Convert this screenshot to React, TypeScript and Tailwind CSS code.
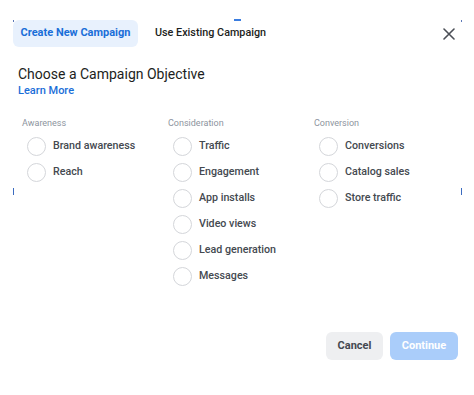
import React from "react";

const columns = [
  { title: "Awareness", items: ["Brand awareness", "Reach"] },
  {
    title: "Consideration",
    items: ["Traffic", "Engagement", "App installs", "Video views", "Lead generation", "Messages"],
  },
  { title: "Conversion", items: ["Conversions", "Catalog sales", "Store traffic"] },
];

export default function App() {
  return (
    <div
      className="relative w-[474px] h-[395px] bg-white overflow-hidden"
      style={{ fontFamily: "Roboto, 'Liberation Sans', Arial, sans-serif" }}
    >
      {/* corner marks */}
      <div className="absolute left-[13px] top-[20px] w-[1px] h-[2px] bg-[#5b78b8]" />
      <div className="absolute left-[461px] top-[20px] w-[1px] h-[2px] bg-[#5b78b8]" />
      <div className="absolute left-[234px] top-[19px] w-[7px] h-[2px] bg-[#3b7de0]" />
      <div className="absolute left-[13px] top-[188px] w-[1px] h-[7px] bg-[#3b6cc0]" />
      <div className="absolute left-[461px] top-[188px] w-[1px] h-[7px] bg-[#3b6cc0]" />

      <div className="pt-[20px] pl-[13px] pr-[19px] flex items-center">
        <div className="h-[27px] w-[125px] rounded-md bg-[#e8f1fd] flex items-center justify-center text-[11px] font-bold text-[#1a6ed8]">
          Create New Campaign
        </div>
        <div className="ml-[17px] text-[10.8px] font-medium text-[#1c1e21]">Use Existing Campaign</div>
        <div className="ml-auto mr-0 flex items-center">
          <svg width="12" height="12" viewBox="0 0 12 12">
            <path d="M1 1 L11 11 M11 1 L1 11" stroke="#4b4f56" strokeWidth="1.6" strokeLinecap="round" />
          </svg>
        </div>
      </div>

      <div className="pl-[18px] mt-[18px]">
        <div className="text-[14px] leading-[18px] text-[#1c1e21]">Choose a Campaign Objective</div>
        <div className="text-[11px] leading-[14px] font-medium text-[#1a6ed8] mt-[1px]">Learn More</div>
      </div>

      <div className="pl-[22px] mt-[20px] grid grid-cols-[146px_146px_146px]">
        {columns.map((col) => (
          <div key={col.title}>
            <div className="text-[9px] leading-[11px] text-[#8d949e]">{col.title}</div>
            <div className="mt-[4px] flex flex-col">
              {col.items.map((it) => (
                <div key={it} className="h-[26px] flex items-center">
                  <div className="ml-[5px] w-[19px] h-[19px] rounded-full border border-[#d4d6da] bg-white" />
                  <div className="ml-[7px] text-[10.7px] font-medium text-[#444950]">{it}</div>
                </div>
              ))}
            </div>
          </div>
        ))}
      </div>

      <div className="absolute right-[16px] top-[332px] flex gap-[7px]">
        <button className="h-[28px] w-[57px] rounded-md bg-[#eeeff1] text-[11px] font-bold text-[#444950]">
          Cancel
        </button>
        <button className="h-[28px] w-[68px] rounded-md bg-[#aacdfa] text-[11px] font-bold text-white">
          Continue
        </button>
      </div>
    </div>
  );
}
